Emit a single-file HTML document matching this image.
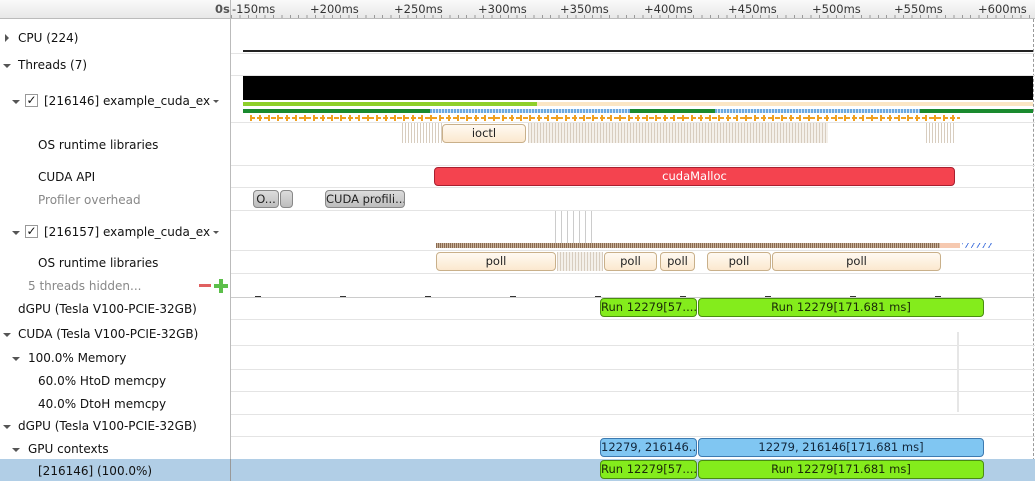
<!DOCTYPE html>
<html><head><meta charset="utf-8"><style>
*{margin:0;padding:0;box-sizing:border-box}
body{width:1035px;height:481px;overflow:hidden;background:#fff;font-family:"DejaVu Sans","Liberation Sans",sans-serif;font-size:12px;color:#111;position:relative}
.a{position:absolute}
.t{position:absolute;white-space:nowrap;line-height:14px;margin-top:1px}
.hl{position:absolute;left:231px;right:0;height:1px;background:#e4e4e4}
.box{position:absolute;border-radius:4px;text-align:center;white-space:nowrap;overflow:hidden;font-size:11.5px;line-height:17px}
.poll{background:linear-gradient(#fffaf2,#fbe8cf);border:1px solid #c9b08a;color:#222}
.run{background:#84ec1c;border:1px solid #4a8d10;color:#1a2a08}
.blu{background:#80c6f2;border:1px solid #3d7ab0;color:#12263a}
.gray{background:linear-gradient(#dcdcdc,#bdbdbd);border:1px solid #888;color:#222}
.tri{position:absolute;width:0;height:0}
.dn{border-left:4px solid transparent;border-right:4px solid transparent;border-top:4px solid #555}
.rt{border-top:4px solid transparent;border-bottom:4px solid transparent;border-left:4px solid #555}
.cb{position:absolute;width:13px;height:13px;border:1px solid #999;background:#fff;font-size:12px;line-height:11px;text-align:center;font-weight:bold}
</style></head><body>
<!-- header -->
<div class="a" style="left:0;top:0;width:1035px;height:19px;background:linear-gradient(#fafafa,#e8e8e8);border-bottom:1px solid #bbb"></div>
<div class="t" style="left:215px;top:1px;font-weight:bold;color:#555;font-size:11.5px">0s</div>
<div class="t" style="left:232px;top:1px;color:#333;font-size:11.5px">-150ms</div>
<div class="t" style="left:310px;top:1px;color:#333;font-size:11.5px">+200ms</div>
<div class="t" style="left:394px;top:1px;color:#333;font-size:11.5px">+250ms</div>
<div class="t" style="left:478px;top:1px;color:#333;font-size:11.5px">+300ms</div>
<div class="t" style="left:560px;top:1px;color:#333;font-size:11.5px">+350ms</div>
<div class="t" style="left:644px;top:1px;color:#333;font-size:11.5px">+400ms</div>
<div class="t" style="left:728px;top:1px;color:#333;font-size:11.5px">+450ms</div>
<div class="t" style="left:812px;top:1px;color:#333;font-size:11.5px">+500ms</div>
<div class="t" style="left:894px;top:1px;color:#333;font-size:11.5px">+550ms</div>
<div class="t" style="left:978px;top:1px;color:#333;font-size:11.5px">+600ms</div>
<div class="a" style="left:231px;top:15px;width:804px;height:3px;background:repeating-linear-gradient(90deg,#999 0 1px,transparent 1px 8.4px)"></div>
<!-- divider -->
<div class="a" style="left:230px;top:0;width:1px;height:481px;background:#bbb"></div>
<div class="a" style="left:1033px;top:19px;width:1px;height:462px;border-left:1px dashed #999"></div>
<!-- selected row -->
<div class="a" style="left:0;top:459px;width:1035px;height:22px;background:#b1cee6"></div>
<div class="a" style="left:230px;top:459px;width:1px;height:22px;background:#999"></div>
<!-- row lines -->
<div class="hl" style="top:53px"></div><div class="hl" style="top:75px"></div><div class="hl" style="top:122px"></div>
<div class="hl" style="top:165px"></div><div class="hl" style="top:187px"></div><div class="hl" style="top:210px"></div>
<div class="hl" style="top:250px"></div><div class="hl" style="top:273px"></div><div class="hl" style="top:297px;background:#ccc"></div>
<div class="hl" style="top:319px"></div><div class="hl" style="top:345px"></div><div class="hl" style="top:369px"></div>
<div class="hl" style="top:391px"></div><div class="hl" style="top:414px"></div><div class="hl" style="top:436px"></div>
<!-- left labels -->
<div class="tri rt" style="left:5px;top:34px"></div><div class="t" style="left:18px;top:30px">CPU (224)</div>
<div class="tri dn" style="left:3px;top:64px"></div><div class="t" style="left:18px;top:57px">Threads (7)</div>
<div class="tri dn" style="left:12px;top:100px"></div><div class="cb" style="left:25px;top:94px">✓</div><div class="t" style="left:44px;top:93px">[216146] example_cuda_ex</div><div class="tri dn" style="left:213px;top:100px;border-width:3px 3px 0 3px"></div>
<div class="t" style="left:38px;top:137px">OS runtime libraries</div>
<div class="t" style="left:38px;top:169px">CUDA API</div>
<div class="t" style="left:38px;top:192px;color:#888">Profiler overhead</div>
<div class="tri dn" style="left:12px;top:231px"></div><div class="cb" style="left:25px;top:225px">✓</div><div class="t" style="left:44px;top:224px">[216157] example_cuda_ex</div><div class="tri dn" style="left:213px;top:231px;border-width:3px 3px 0 3px"></div>
<div class="t" style="left:38px;top:255px">OS runtime libraries</div>
<div class="t" style="left:28px;top:278px;color:#888">5 threads hidden...</div>
<div class="a" style="left:199px;top:284px;width:12px;height:3px;background:#e06060"></div>
<div class="a" style="left:214px;top:284px;width:14px;height:4px;background:#5cbf4a"></div><div class="a" style="left:219px;top:279px;width:4px;height:14px;background:#5cbf4a"></div>
<div class="t" style="left:18px;top:301px">dGPU (Tesla V100-PCIE-32GB)</div>
<div class="tri dn" style="left:3px;top:333px"></div><div class="t" style="left:18px;top:326px">CUDA (Tesla V100-PCIE-32GB)</div>
<div class="tri dn" style="left:12px;top:357px"></div><div class="t" style="left:28px;top:350px">100.0% Memory</div>
<div class="t" style="left:38px;top:373px">60.0% HtoD memcpy</div>
<div class="t" style="left:38px;top:396px">40.0% DtoH memcpy</div>
<div class="tri dn" style="left:3px;top:425px"></div><div class="t" style="left:18px;top:418px">dGPU (Tesla V100-PCIE-32GB)</div>
<div class="tri dn" style="left:12px;top:448px"></div><div class="t" style="left:28px;top:441px">GPU contexts</div>
<div class="t" style="left:38px;top:463px">[216146] (100.0%)</div>
<!-- CPU line -->
<div class="a" style="left:243px;top:50px;width:790px;height:2px;background:#222"></div>
<!-- thread 216146 -->
<div class="a" style="left:243px;top:76px;width:790px;height:24px;background:#000"></div>
<div class="a" style="left:243px;top:102px;width:294px;height:4px;background:#8ecf2a"></div>
<div class="a" style="left:537px;top:102px;width:496px;height:4px;background:#fbe6c4"></div>
<div class="a" style="left:243px;top:109px;width:790px;height:4px;background:#1a8a2e"></div>
<div class="a" style="left:430px;top:109px;width:200px;height:4px;background:repeating-linear-gradient(90deg,#6aa8e0 0 2px,#cfe4f7 2px 3px)"></div>
<div class="a" style="left:715px;top:109px;width:205px;height:4px;background:repeating-linear-gradient(90deg,#6aa8e0 0 2px,#cfe4f7 2px 3px)"></div>
<div class="a" style="left:250px;top:117px;width:710px;height:2px;background:repeating-linear-gradient(90deg,#f0a020 0 5px,transparent 5px 7px)"></div>
<div class="a" style="left:250px;top:115px;width:710px;height:6px;background:repeating-linear-gradient(90deg,#f0a020 0 2px,transparent 2px 9px)"></div>
<!-- os runtime gray ticks -->
<div class="a" style="left:402px;top:123px;width:40px;height:20px;background:repeating-linear-gradient(90deg,#d8cdbf 0 1px,transparent 1px 3px)"></div>
<div class="a" style="left:528px;top:123px;width:300px;height:20px;background:repeating-linear-gradient(90deg,#d8cdbf 0 1px,#f4f0ea 1px 3px)"></div>
<div class="a" style="left:926px;top:123px;width:30px;height:20px;background:repeating-linear-gradient(90deg,#d8cdbf 0 1px,transparent 1px 3px)"></div>
<div class="box poll" style="left:442px;top:124px;width:84px;height:19px">ioctl</div>
<!-- cuda api -->
<div class="box" style="left:434px;top:167px;width:521px;height:19px;background:#f4434f;border:1px solid #a82030;color:#fff">cudaMalloc</div>
<div class="box gray" style="left:253px;top:190px;width:26px;height:18px">O...</div>
<div class="box gray" style="left:280px;top:190px;width:13px;height:18px"></div>
<div class="box gray" style="left:325px;top:190px;width:80px;height:18px">CUDA profili...</div>
<!-- thread 216157 -->
<div class="a" style="left:555px;top:211px;width:40px;height:32px;background:repeating-linear-gradient(90deg,#ccc 0 1px,transparent 1px 6px)"></div>
<div class="a" style="left:436px;top:243px;width:504px;height:5px;background:repeating-linear-gradient(90deg,#8a6a50 0 1px,#c9b39c 1px 2px)"></div>
<div class="a" style="left:940px;top:243px;width:20px;height:5px;background:#f6c9b0"></div>
<div class="a" style="left:962px;top:243px;width:30px;height:5px;background:repeating-linear-gradient(120deg,#5580e0 0 1px,transparent 1px 5px)"></div>
<div class="box poll" style="left:436px;top:252px;width:120px;height:19px">poll</div>
<div class="a" style="left:557px;top:252px;width:46px;height:19px;background:repeating-linear-gradient(90deg,#d8cdbf 0 1px,#f4f0ea 1px 3px)"></div>
<div class="box poll" style="left:604px;top:252px;width:53px;height:19px">poll</div>
<div class="box poll" style="left:660px;top:252px;width:35px;height:19px">poll</div>
<div class="box poll" style="left:707px;top:252px;width:64px;height:19px">poll</div>
<div class="box poll" style="left:772px;top:252px;width:169px;height:19px">poll</div>
<div class="a" style="left:255px;top:296px;width:700px;height:1px;background:repeating-linear-gradient(90deg,#333 0 6px,transparent 6px 85px)"></div>
<!-- gpu -->
<div class="box run" style="left:600px;top:298px;width:97px;height:19px">Run 12279[57....</div>
<div class="box run" style="left:698px;top:298px;width:286px;height:19px">Run 12279[171.681 ms]</div>
<div class="a" style="left:957px;top:332px;width:2px;height:80px;background:#e6e6e6"></div>
<div class="box blu" style="left:600px;top:438px;width:97px;height:19px">12279, 216146...</div>
<div class="box blu" style="left:698px;top:438px;width:286px;height:19px">12279, 216146[171.681 ms]</div>
<div class="box run" style="left:600px;top:460px;width:97px;height:19px">Run 12279[57....</div>
<div class="box run" style="left:698px;top:460px;width:286px;height:19px">Run 12279[171.681 ms]</div>
</body></html>
